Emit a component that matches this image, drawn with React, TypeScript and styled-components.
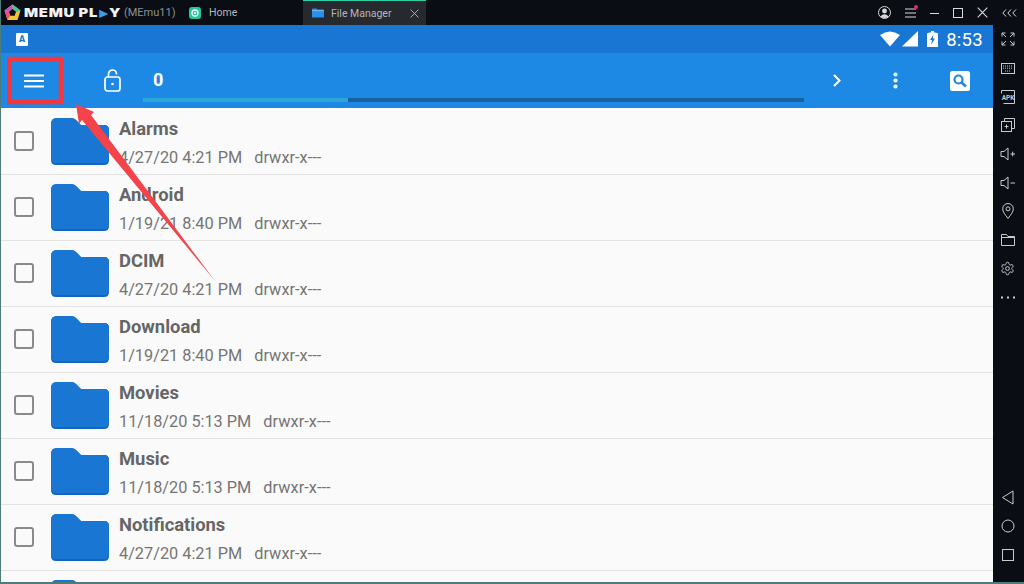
import React from "react";
import styled, { createGlobalStyle } from "styled-components";

const GlobalStyle = createGlobalStyle`
    html, body {
        margin: 0;
        padding: 0;
        width: 1024px;
        height: 584px;
        overflow: hidden;
        background: #0a0e14;
        font-family: Roboto, "Liberation Sans", sans-serif;
    }
`;

/**CSS *******************************************/
const Frame = styled.div`
    position: relative;
    box-sizing: border-box;
    width: 1024px;
    height: 584px;
    border: solid #4d7d7b;
    border-width: 0 0 2px 1px;
    display: flex;
    flex-direction: column;
    overflow: hidden;
`;
const TitleBar = styled.div`
    height: 25px;
    flex: none;
    background: #0a0e14;
    display: flex;
    align-items: center;
`;
const Brand = styled.div`
    display: flex;
    align-items: center;
    width: 188px;
    flex: none;
    padding-left: 3px;
    box-sizing: border-box;
`;
const BrandName = styled.span`
    display: inline-block;
    font-family: Inter, sans-serif;
    font-weight: 900;
    font-size: 12px;
    letter-spacing: 0.6px;
    color: #f2f2f2;
    margin: 0 18px 0 3px;
    white-space: nowrap;
    transform: scaleX(1.23);
    transform-origin: left center;
    em {
        color: #3f9be8;
        font-style: normal;
        font-size: 9px;
        letter-spacing: 0;
    }
`;
const Instance = styled.span`
    font-size: 11px;
    color: #8d9196;
    margin-left: 3px;
    white-space: nowrap;
`;
const Tab = styled.div<{ $active?: boolean }>`
    height: 25px;
    box-sizing: border-box;
    width: ${(p) => (p.$active ? "123px" : "114px")};
    flex: none;
    display: flex;
    align-items: center;
    padding-left: ${(p) => (p.$active ? "9px" : "0")};
    background: ${(p) => (p.$active ? "#26292e" : "transparent")};
    border-top: ${(p) => (p.$active ? "1px solid #2fd0a8" : "none")};
    color: #b4b7ba;
    font-size: 10.5px;
    gap: ${(p) => (p.$active ? "7px" : "8px")};
`;
const TabClose = styled.span`
    margin-left: auto;
    margin-right: 7px;
    display: flex;
`;
const WindowControls = styled.div`
    margin-left: auto;
    display: flex;
    align-items: center;
    color: #d9dadb;
    padding-right: 7px;
    gap: 14px;
    position: relative;
    svg {
        display: block;
    }
`;
const NotifyDot = styled.span`
    position: absolute;
    left: 36px;
    top: -1px;
    width: 4px;
    height: 4px;
    border-radius: 50%;
    background: #f0206a;
`;
const Body = styled.div`
    flex: 1;
    min-height: 0;
    display: flex;
`;
const Main = styled.div`
    flex: 1;
    min-width: 0;
    display: flex;
    flex-direction: column;
    background: #fafafa;
`;
const StatusBar = styled.div`
    height: 28px;
    flex: none;
    background: #1976d2;
    display: flex;
    align-items: center;
    padding: 0 10px 0 15px;
    color: #fff;
`;
const AppBadge = styled.div`
    width: 12px;
    height: 13px;
    background: #fff;
    border-radius: 1px;
    color: #1976d2;
    font-size: 9px;
    font-weight: 900;
    text-align: center;
    line-height: 12px;
`;
const StatusIcons = styled.div`
    margin-left: auto;
    display: flex;
    align-items: center;
    gap: 9px;
`;
const Clock = styled.span`
    font-size: 18.5px;
    letter-spacing: 0.3px;
    margin-left: -1px;
    line-height: 22px;
    padding-top: 2px;
`;
const Toolbar = styled.div`
    height: 55px;
    flex: none;
    background: #1e88e5;
    display: flex;
    align-items: center;
    color: #fff;
`;
const ToolSlot = styled.div<{ $w: number }>`
    width: ${(p) => p.$w}px;
    flex: none;
    display: flex;
    justify-content: center;
    align-items: center;
`;
const LockSlot = styled.div`
    width: 77px;
    flex: none;
    box-sizing: border-box;
    padding-right: 22px;
    display: flex;
    justify-content: flex-end;
    align-items: center;
`;
const PathArea = styled.div`
    width: 661px;
    flex: none;
    align-self: stretch;
    display: flex;
    flex-direction: column;
    justify-content: flex-end;
`;
const PathCount = styled.div`
    font-size: 18px;
    font-weight: 700;
    margin: 0 0 6px 10px;
    line-height: 24px;
`;
const Progress = styled.div`
    height: 4px;
    margin-bottom: 6px;
    background: #15629f;
`;
const ProgressFill = styled.div`
    height: 100%;
    background: #2ba6d6;
`;
const List = styled.div`
    flex: 1;
    min-height: 0;
    overflow: hidden;
    padding-top: 1px;
`;
const Row = styled.div`
    height: 66px;
    box-sizing: border-box;
    border-bottom: 1px solid #e3e3e3;
    display: flex;
    align-items: flex-start;
`;
const Check = styled.div`
    width: 16px;
    height: 16px;
    flex: none;
    border: 2px solid #8a8a8a;
    border-radius: 3px;
    margin: 22px 0 0 13px;
`;
const FolderSlot = styled.div`
    flex: none;
    margin: 9px 10px 0 17px;
    height: 47px;
    svg {
        display: block;
    }
`;
const RowText = styled.div`
    display: flex;
    flex-direction: column;
    padding-top: 8px;
    min-width: 0;
`;
const FileName = styled.div`
    font-size: 18.4px;
    font-weight: 700;
    line-height: 24px;
    color: #666;
`;
const Meta = styled.div`
    font-size: 16.3px;
    line-height: 20px;
    margin-top: 7px;
    color: #757575;
    display: flex;
    gap: 12px;
    white-space: nowrap;
`;
const Perm = styled.span`
    letter-spacing: 0.05px;
`;
const SideBar = styled.div`
    width: 31px;
    flex: none;
    background: #0a0e14;
    color: #c9cbcd;
    display: flex;
    flex-direction: column;
    align-items: center;
    padding: 0 2px 13px 0;
    box-sizing: border-box;
`;
const SideGroup = styled.div`
    display: flex;
    flex-direction: column;
    align-items: center;
    svg {
        display: block;
    }
`;
const SideButton = styled.div`
    height: 28.7px;
    display: flex;
    align-items: center;
    justify-content: center;
`;
const BottomGroup = styled(SideGroup)`
    margin-top: auto;
`;
const Overlay = styled.svg`
    position: absolute;
    left: -1px;
    top: 0;
    pointer-events: none;
`;
/**CSS end****************************************/

type FileRow = { name: string; date: string; perm: string };

const files: FileRow[] = [
    { name: "Alarms", date: "4/27/20 4:21 PM", perm: "drwxr-x---" },
    { name: "Android", date: "1/19/21 8:40 PM", perm: "drwxr-x---" },
    { name: "DCIM", date: "4/27/20 4:21 PM", perm: "drwxr-x---" },
    { name: "Download", date: "1/19/21 8:40 PM", perm: "drwxr-x---" },
    { name: "Movies", date: "11/18/20 5:13 PM", perm: "drwxr-x---" },
    { name: "Music", date: "11/18/20 5:13 PM", perm: "drwxr-x---" },
    { name: "Notifications", date: "4/27/20 4:21 PM", perm: "drwxr-x---" },
    { name: "", date: "", perm: "" },
];

const Logo = () => (
    <svg width="17" height="17" viewBox="0 0 17 17">
        <path d="M8.5 0.5 L16.5 6.5 L13.5 16 L3.5 16 L0.5 6.5 Z" fill="#f4c430" />
        <path d="M8.5 0.5 L16.5 6.5 L12 8 L8.5 5 Z" fill="#35c9a5" />
        <path d="M8.5 0.5 L0.5 6.5 L5 8 L8.5 5 Z" fill="#c04fd0" />
        <path d="M0.5 6.5 L3.5 16 L6 12 L5 8 Z" fill="#e8507a" />
        <path d="M8.5 5 L12 7.7 L10.7 11.8 L6.3 11.8 L5 7.7 Z" fill="#0a0e14" />
    </svg>
);

const HomeIcon = () => (
    <svg width="12" height="12" viewBox="0 0 12 12">
        <rect width="12" height="12" rx="3" fill="#22c9a0" />
        <circle cx="6" cy="6" r="3" fill="none" stroke="#fff" strokeWidth="1.3" />
        <circle cx="6" cy="6" r="1" fill="#fff" />
    </svg>
);

const TabFolder = () => (
    <svg width="12" height="10" viewBox="0 0 13 10">
        <path d="M0 1 Q0 0 1 0 H5 L6 1.2 H12 Q13 1.2 13 2.2 V9 Q13 10 12 10 H1 Q0 10 0 9 Z" fill="#2a8fe8" />
        <rect y="2" width="13" height="1" fill="#7cc0f5" />
    </svg>
);

const Cross = ({ size = 9 }: { size?: number }) => (
    <svg width={size} height={size} viewBox="0 0 8 8" stroke="currentColor" strokeWidth="0.8" fill="none">
        <path d="M0.5 0.5 L7.5 7.5 M7.5 0.5 L0.5 7.5" />
    </svg>
);

const Folder = () => (
    <svg width="58" height="47" viewBox="0 0 58 47">
        <path d="M0 6 Q0 0 6 0 H20 Q23 0 25 2 L30 7 H53 Q58 7 58 12 V42 Q58 47 53 47 H5 Q0 47 0 42 Z" fill="#1565c0" />
        <path d="M0 6 Q0 0 6 0 H20 Q23 0 25 2 L30 7 H53 Q58 7 58 12 V40 Q58 45 53 45 H5 Q0 45 0 40 Z" fill="#1976d2" />
    </svg>
);

const sideIcons: React.ReactNode[] = [
    <svg key="full" width="14" height="14" viewBox="0 0 14 14" fill="none" stroke="currentColor" strokeWidth="1">
        <path d="M1 4.5 V1 H4.5 M1 1 L5 5 M13 4.5 V1 H9.500 M13 1 L9 5 M1 9.500 V13 H4.500 M1 13 L5 9 M13 9.500 V13 H9.500 M13 13 L9 9" />
    </svg>,
    <svg key="keys" width="14" height="11" viewBox="0 0 14 11" fill="none" stroke="currentColor" strokeWidth="1">
        <rect x="0.500" y="0.500" width="13" height="10" />
        <path d="M2 3 H12 M2 5.200 H12 M4 8 H10" strokeDasharray="1 1" />
    </svg>,
    <svg key="apk" width="14" height="14" viewBox="0 0 14 14" fill="none" stroke="currentColor" strokeWidth="1">
        <path d="M0.500 3.500 V0.500 H13.500 V13.500 H2.500" />
        <text x="7" y="10" textAnchor="middle" fontFamily="Roboto, sans-serif" fontSize="6.500" fontWeight="700" fill="currentColor" stroke="none">APK</text>
    </svg>,
    <svg key="multi" width="14" height="14" viewBox="0 0 14 14" fill="none" stroke="currentColor" strokeWidth="1">
        <rect x="0.500" y="3.500" width="10" height="10" />
        <path d="M3.500 3.500 V0.500 H13.500 V10.500 H10.500 M5.500 6.500 V10.500 M3.500 8.500 H7.500" />
    </svg>,
    <svg key="volup" width="16" height="14" viewBox="0 0 16 14" fill="none" stroke="currentColor" strokeWidth="1">
        <path d="M8 1 L4 4.500 H1 V9.500 H4 L8 13 Z M10.500 7 H15 M12.700 4.700 V9.300" />
    </svg>,
    <svg key="voldown" width="16" height="14" viewBox="0 0 16 14" fill="none" stroke="currentColor" strokeWidth="1">
        <path d="M8 1 L4 4.500 H1 V9.500 H4 L8 13 Z M10.500 7 H15" />
    </svg>,
    <svg key="pin" width="12" height="16" viewBox="0 0 12 16" fill="none" stroke="currentColor" strokeWidth="1">
        <path d="M6 15.500 C3 11.500 0.700 8.800 0.700 5.800 A5.300 5.300 0 0 1 11.300 5.800 C11.300 8.800 9 11.500 6 15.500 Z" />
        <circle cx="6" cy="5.800" r="2" />
    </svg>,
    <svg key="folder" width="14" height="12" viewBox="0 0 14 12" fill="none" stroke="currentColor" strokeWidth="1">
        <path d="M0.500 11.500 V0.500 H5.500 L7 2.500 H13.500 V11.500 Z M0.500 3.500 H13.500" />
    </svg>,
    <svg key="gear" width="15" height="15" viewBox="0 0 24 24" fill="none" stroke="currentColor" strokeWidth="1.600">
        <path d="M12.220 2h-.44a2 2 0 0 0-2 2v.18a2 2 0 0 1-1 1.730l-.43.25a2 2 0 0 1-2 0l-.15-.08a2 2 0 0 0-2.730.73l-.22.38a2 2 0 0 0 .73 2.730l.15.1a2 2 0 0 1 1 1.720v.51a2 2 0 0 1-1 1.740l-.15.09a2 2 0 0 0-.73 2.730l.22.38a2 2 0 0 0 2.730.73l.15-.08a2 2 0 0 1 2 0l.43.25a2 2 0 0 1 1 1.730V20a2 2 0 0 0 2 2h.44a2 2 0 0 0 2-2v-.18a2 2 0 0 1 1-1.730l.43-.25a2 2 0 0 1 2 0l.15.08a2 2 0 0 0 2.730-.73l.22-.39a2 2 0 0 0-.73-2.730l-.15-.08a2 2 0 0 1-1-1.740v-.5a2 2 0 0 1 1-1.740l.15-.09a2 2 0 0 0 .73-2.730l-.22-.38a2 2 0 0 0-2.730-.73l-.15.08a2 2 0 0 1-2 0l-.43-.25a2 2 0 0 1-1-1.730V4a2 2 0 0 0-2-2z" />
        <circle cx="12" cy="12" r="3" />
    </svg>,
    <svg key="more" width="14" height="3" viewBox="0 0 14 3" fill="currentColor">
        <rect x="0" y="0.500" width="2" height="2" />
        <rect x="6" y="0.500" width="2" height="2" />
        <rect x="12" y="0.500" width="2" height="2" />
    </svg>,
];

const App = () => {
    return (
        <>
            <GlobalStyle />
            <Frame>
                <TitleBar>
                    <Brand>
                        <Logo />
                        <BrandName>MEMU PL<em>▶</em>Y</BrandName>
                        <Instance>(MEmu11)</Instance>
                    </Brand>
                    <Tab>
                        <HomeIcon />
                        Home
                    </Tab>
                    <Tab $active>
                        <TabFolder />
                        File Manager
                        <TabClose><Cross /></TabClose>
                    </Tab>
                    <WindowControls>
                        <svg width="13" height="13" viewBox="0 0 13 13">
                            <circle cx="6.500" cy="6.500" r="6" fill="none" stroke="currentColor" />
                            <circle cx="6.500" cy="5" r="2.400" fill="currentColor" />
                            <path d="M2.300 10.500 Q6.500 5.800 10.700 10.500 Q6.500 13.500 2.300 10.500 Z" fill="currentColor" />
                        </svg>
                        <svg width="11" height="10" viewBox="0 0 11 10" stroke="currentColor" fill="none">
                            <path d="M0 1 H11 M0 5 H11 M0 9 H11" />
                        </svg>
                        <NotifyDot />
                        <svg width="9" height="10" viewBox="0 0 9 10" stroke="currentColor" fill="none">
                            <path d="M0 5.500 H9" />
                        </svg>
                        <svg width="10" height="10" viewBox="0 0 10 10" stroke="currentColor" fill="none">
                            <rect x="0.500" y="0.500" width="9" height="9" />
                        </svg>
                        <Cross size={11} />
                        <svg width="15" height="8" viewBox="0 0 15 8" stroke="currentColor" fill="none">
                            <path d="M4 0.500 L0.800 4 L4 7.500 M9 0.500 L5.800 4 L9 7.500 M14 0.500 L10.800 4 L14 7.500" />
                        </svg>
                    </WindowControls>
                </TitleBar>
                <Body>
                    <Main>
                        <StatusBar>
                            <AppBadge>A</AppBadge>
                            <StatusIcons>
                                <svg width="38" height="16" viewBox="0 0 38 16" fill="#fff">
                                    <path d="M0 4 Q10 -3 20 4 L10 15.500 Z" />
                                    <path d="M38 0 V15.500 H22 Z" />
                                </svg>
                                <svg width="11" height="16" viewBox="0 0 11 16">
                                    <path d="M3 1.500 H4 V0 H7 V1.500 H8 Q11 1.500 11 3 V16 H0 V3 Q0 1.500 3 1.500 Z" fill="#fff" />
                                    <path d="M6.500 3.500 L3 9 H5 L4.200 13.500 L8 7.500 H5.800 Z" fill="#1976d2" />
                                </svg>
                                <Clock>8:53</Clock>
                            </StatusIcons>
                        </StatusBar>
                        <Toolbar>
                            <ToolSlot $w={65}>
                                <svg width="20" height="14" viewBox="0 0 20 14" stroke="#fff" strokeWidth="2" fill="none">
                                    <path d="M0 1.500 H20 M0 7 H20 M0 12.500 H20" />
                                </svg>
                            </ToolSlot>
                            <LockSlot>
                                <svg width="17" height="23" viewBox="0 0 17 23" fill="none" stroke="#fff" strokeWidth="1.700">
                                    <rect x="1" y="8" width="15" height="14" rx="2.500" />
                                    <path d="M4.500 8 V5 A4 4 0 0 1 12.500 5 V5.500" />
                                    <circle cx="8.500" cy="15" r="1.300" fill="#fff" stroke="none" />
                                </svg>
                            </LockSlot>
                            <PathArea>
                                <PathCount>0</PathCount>
                                <Progress>
                                    <ProgressFill style={{ width: `${(205 / 661) * 100}%` }} />
                                </Progress>
                            </PathArea>
                            <ToolSlot $w={66}>
                                <svg width="8" height="13" viewBox="0 0 8 13" fill="none" stroke="#fff" strokeWidth="2">
                                    <path d="M1 1 L6.500 6.500 L1 12" />
                                </svg>
                            </ToolSlot>
                            <ToolSlot $w={50}>
                                <svg width="5" height="17" viewBox="0 0 5 17" fill="#fff">
                                    <circle cx="2.500" cy="2.500" r="2.100" />
                                    <circle cx="2.500" cy="8.500" r="2.100" />
                                    <circle cx="2.500" cy="14.500" r="2.100" />
                                </svg>
                            </ToolSlot>
                            <ToolSlot $w={80}>
                                <svg width="20" height="20" viewBox="0 0 20 20">
                                    <rect width="20" height="20" rx="2.500" fill="#fff" />
                                    <circle cx="8.500" cy="8.500" r="4" fill="none" stroke="#1e88e5" strokeWidth="2.200" />
                                    <path d="M11.500 11.500 L16 15.500" stroke="#1e88e5" strokeWidth="2.600" />
                                </svg>
                            </ToolSlot>
                        </Toolbar>
                        <List>
                            {files.map((file, i) => (
                                <Row key={i}>
                                    <Check />
                                    <FolderSlot><Folder /></FolderSlot>
                                    <RowText>
                                        <FileName>{file.name}</FileName>
                                        <Meta>
                                            <span>{file.date}</span>
                                            <Perm>{file.perm}</Perm>
                                        </Meta>
                                    </RowText>
                                </Row>
                            ))}
                        </List>
                    </Main>
                    <SideBar>
                        <SideGroup>
                            {sideIcons.map((icon, i) => (
                                <SideButton key={i}>{icon}</SideButton>
                            ))}
                        </SideGroup>
                        <BottomGroup>
                            <SideButton>
                                <svg width="13" height="15" viewBox="0 0 13 15" fill="none" stroke="currentColor">
                                    <path d="M12 1 L1.500 7.500 L12 14 Z" />
                                </svg>
                            </SideButton>
                            <SideButton>
                                <svg width="14" height="14" viewBox="0 0 14 14" fill="none" stroke="currentColor">
                                    <circle cx="7" cy="7" r="6" />
                                </svg>
                            </SideButton>
                            <SideButton>
                                <svg width="12" height="12" viewBox="0 0 12 12" fill="none" stroke="currentColor">
                                    <rect x="0.500" y="0.500" width="11" height="11" />
                                </svg>
                            </SideButton>
                        </BottomGroup>
                    </SideBar>
                </Body>
                <Overlay width="1024" height="584" viewBox="0 0 1024 584">
                    <rect x="9.500" y="59" width="51.500" height="43" fill="none" stroke="#f5363c" strokeWidth="4.500" />
                    <path d="M76 104 L94 112 L91 115 L215 281 L82 120 L79 124 Z" fill="#f4434a" />
                </Overlay>
            </Frame>
        </>
    );
};

export default App;
